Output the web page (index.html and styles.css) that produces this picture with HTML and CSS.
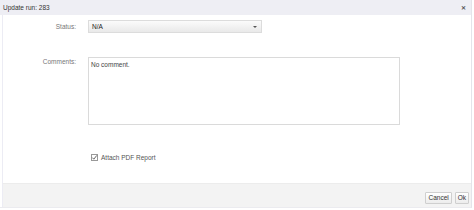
FILE: index.html
```html
<!DOCTYPE html>
<html>
<head>
<meta charset="utf-8">
<link rel="stylesheet" href="styles.css">
</head>
<body>
<div class="dialog">
  <div class="titlebar">
    <span class="title">Update run: 283</span>
    <span class="close">&#x2715;</span>
  </div>
  <div class="content">
    <div class="row row-status">
      <label class="label">Status:</label>
      <div class="select">
        <span>N/A</span>
        <span class="caret"></span>
      </div>
    </div>
    <div class="row row-comments">
      <label class="label">Comments:</label>
      <div class="textarea">No comment.</div>
    </div>
    <div class="row row-check">
      <span class="label"></span>
      <div class="check">
        <span class="box"><svg width="7" height="7" viewBox="0 0 7 7"><path d="M1.3 3.6 L2.8 5.2 L5.8 1.4" fill="none" stroke="#555" stroke-width="0.9"/></svg></span>
        <span>Attach PDF Report</span>
      </div>
    </div>
  </div>
  <div class="footer">
    <button class="btn">Cancel</button>
    <button class="btn">Ok</button>
  </div>
</div>
</body>
</html>
```
FILE: styles.css
```css
html, body {
  margin: 0;
  padding: 0;
  background: #ffffff;
}
body {
  font-family: "Liberation Sans", Arial, sans-serif;
  font-size: 6.5px;
  color: #444;
}
.dialog {
  width: 471px;
  height: 207px;
  border-right: 1px solid #e4e4ea;
  border-bottom: 1px solid #ebebef;
  display: flex;
  flex-direction: column;
  box-sizing: content-box;
}
.titlebar {
  height: 15px;
  background: #eeeef4;
  display: flex;
  align-items: center;
  justify-content: space-between;
  padding: 0 5px 0 3px;
  color: #333;
}
.close {
  font-size: 6px;
  color: #555;
  font-weight: bold;
}
.content {
  flex: 1;
  display: flex;
  flex-direction: column;
  border-left: 1px solid #ececf4;
  margin-left: 2px;
}
.row {
  display: flex;
  align-items: flex-start;
}
.label {
  width: 73px;
  text-align: right;
  padding-right: 12px;
  color: #777;
  flex: none;
}
.row-status {
  margin-top: 5px;
  align-items: center;
}
.select {
  width: 165px;
  height: 11px;
  border: 1px solid #dcdcdc;
  background: linear-gradient(#fbfbfb, #e9e9e9);
  display: flex;
  align-items: center;
  justify-content: space-between;
  padding: 0 4px 0 3px;
  color: #222;
}
.caret {
  width: 0;
  height: 0;
  border-left: 2px solid transparent;
  border-right: 2px solid transparent;
  border-top: 2px solid #555;
}
.row-comments {
  margin-top: 24px;
}
.row-comments .label {
  padding-top: 1px;
}
.textarea {
  width: 308px;
  height: 63px;
  border: 1px solid #dadada;
  padding: 3px 0 0 2px;
  color: #444;
}
.row-check {
  margin-top: 29px;
}
.check {
  display: flex;
  align-items: center;
  gap: 3px;
  margin-left: 3px;
  color: #555;
}
.box {
  width: 7px;
  height: 7px;
  border: 1px solid #999;
  display: flex;
  align-items: center;
  justify-content: center;
  box-sizing: border-box;
  background: #fff;
}
.box svg {
  flex: none;
}
.footer {
  height: 23px;
  background: #f3f3f3;
  border-top: 1px solid #ececec;
  border-left: 1px solid #ececf4;
  margin-left: 2px;
  display: flex;
  justify-content: flex-end;
  align-items: center;
  gap: 3px;
  padding: 0 2px 0 0;
}
.btn {
  font-family: "Liberation Sans", Arial, sans-serif;
  font-size: 6.5px;
  color: #333;
  height: 12px;
  padding: 0 2px;
  border: 1px solid #cfcfcf;
  background: linear-gradient(#ffffff, #ececec);
  border-radius: 1px;
  margin-top: 4px;
}
```
